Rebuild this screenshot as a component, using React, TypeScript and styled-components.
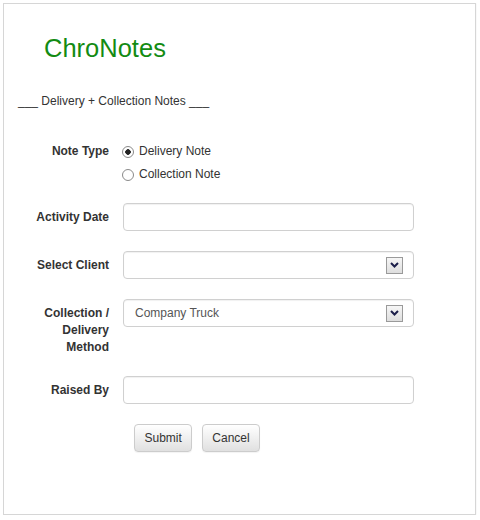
import styled, { createGlobalStyle } from "styled-components";

const GlobalStyle = createGlobalStyle`
    body {
        margin: 3px;
        background: #ffffff;
        font-family: "Liberation Sans", Arial, sans-serif;
        color: #333333;
    }
`;

function SelectField(props: { value?: string }) {
    return (
        <SelectBox>
            <SelectText>{props.value}</SelectText>
            <ArrowBox>
                <svg width="9" height="6" viewBox="0 0 9 6">
                    <path d="M1 1 L4.5 4.5 L8 1" fill="none" stroke="#1c1f4a" strokeWidth="2" />
                </svg>
            </ArrowBox>
        </SelectBox>
    );
}

export default function App() {
    return (
        <>
            <GlobalStyle />
            <Wrapper>
                <Title>ChroNotes</Title>
                <Subtitle>___ Delivery + Collection Notes ___</Subtitle>
                <Form>
                    <Label $flat>Note Type</Label>
                    <RadioGroup>
                        <RadioOption>
                            <Radio type="radio" name="noteType" defaultChecked />
                            Delivery Note
                        </RadioOption>
                        <RadioOption>
                            <Radio type="radio" name="noteType" />
                            Collection Note
                        </RadioOption>
                    </RadioGroup>

                    <Label>Activity Date</Label>
                    <TextInput type="text" />

                    <Label>Select Client</Label>
                    <SelectField />

                    <Label>Collection /<br />Delivery<br />Method</Label>
                    <SelectField value="Company Truck" />

                    <Label>Raised By</Label>
                    <TextInput type="text" />

                    <Actions>
                        <Button>Submit</Button>
                        <Button>Cancel</Button>
                    </Actions>
                </Form>
            </Wrapper>
        </>
    );
}

const Wrapper = styled.div`
    box-sizing: border-box;
    width: 473px;
    border: 1px solid #d6d6d6;
    box-shadow: 0 0 2px rgba(0, 0, 0, 0.08);
    padding-bottom: 62px;
`;

const Title = styled.h1`
    margin: 0;
    padding: 29px 0 0 40px;
    font-size: 25.5px;
    line-height: 30px;
    font-weight: normal;
    color: #138b13;
`;

const Subtitle = styled.div`
    margin-top: 30px;
    padding-left: 14px;
    font-size: 12px;
    line-height: 17px;
    color: #333333;
`;

const Form = styled.form`
    display: grid;
    grid-template-columns: 105px 291px;
    column-gap: 14px;
    row-gap: 20px;
    margin-top: 33px;
`;

const Label = styled.div<{ $flat?: boolean }>`
    text-align: right;
    font-size: 12px;
    font-weight: bold;
    line-height: 17px;
    padding-top: ${(p) => (p.$flat ? "0" : "6px")};
    color: #333333;
`;

const RadioGroup = styled.div`
    display: flex;
    flex-direction: column;
    gap: 6px;
`;

const RadioOption = styled.label`
    display: flex;
    align-items: center;
    gap: 5px;
    font-size: 12px;
    line-height: 17px;
    color: #333333;
`;

const Radio = styled.input`
    appearance: none;
    box-sizing: border-box;
    width: 12px;
    height: 12px;
    margin: 0 0 0 -1px;
    border: 1px solid #8a8a8a;
    border-radius: 50%;
    background: #ffffff;

    &:checked {
        background: radial-gradient(circle, #222222 0 2.5px, #ffffff 3px);
    }
`;

const TextInput = styled.input`
    box-sizing: border-box;
    width: 291px;
    height: 28px;
    margin: 0;
    padding: 0 11px;
    border: 1px solid #d0d0d0;
    border-radius: 4px;
    box-shadow: inset 0 1px 1px rgba(0, 0, 0, 0.06);
    font-family: inherit;
    font-size: 12px;
    outline: none;
`;

const SelectBox = styled.div`
    box-sizing: border-box;
    width: 291px;
    height: 28px;
    display: flex;
    align-items: center;
    justify-content: space-between;
    padding: 0 10px 0 11px;
    border: 1px solid #d0d0d0;
    border-radius: 4px;
    box-shadow: inset 0 1px 1px rgba(0, 0, 0, 0.06);
    font-size: 12px;
`;

const SelectText = styled.span`
    color: #555555;
`;

const ArrowBox = styled.span`
    box-sizing: border-box;
    width: 17px;
    height: 17px;
    display: flex;
    align-items: center;
    justify-content: center;
    border: 1px solid #9a9a9a;
    background: linear-gradient(#f6f6f6, #dedede);
`;

const Actions = styled.div`
    grid-column: 2;
    display: flex;
    gap: 9.5px;
    padding-left: 11px;
`;

const Button = styled.button`
    box-sizing: border-box;
    height: 28px;
    padding: 0 9.5px;
    border: 1px solid #cccccc;
    border-radius: 4px;
    background: linear-gradient(#ffffff, #e0e0e0);
    box-shadow: 0 1px 1px rgba(0, 0, 0, 0.05);
    font-family: inherit;
    font-size: 12px;
    color: #333333;
    cursor: pointer;
`;
